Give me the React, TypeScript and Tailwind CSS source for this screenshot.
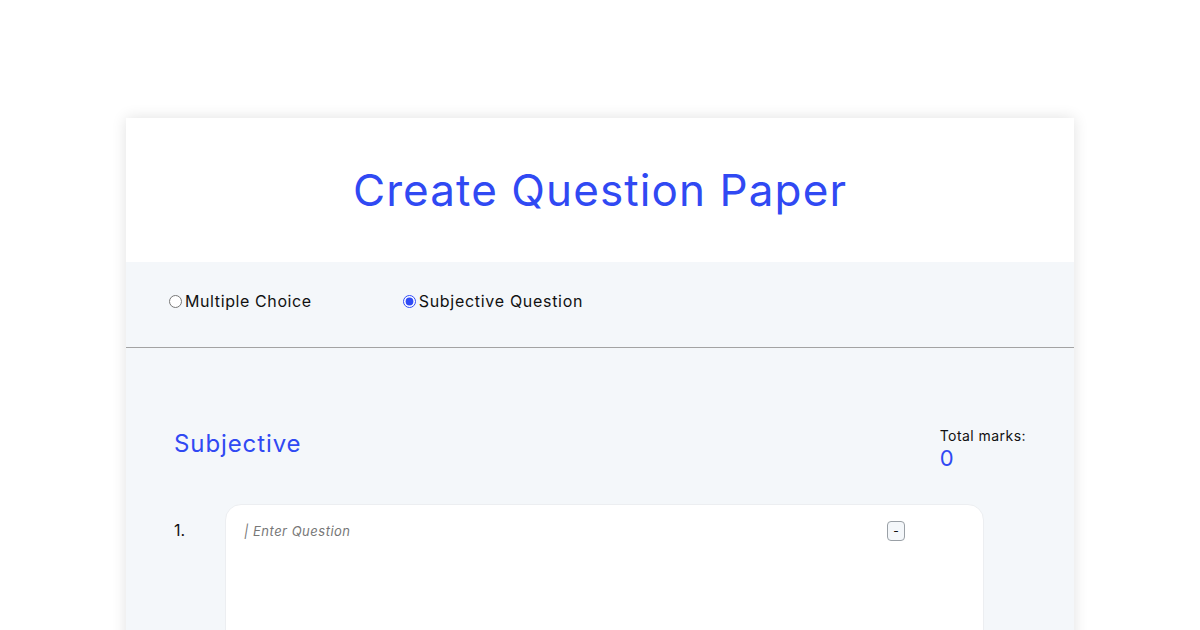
import { useState } from 'react';

export default function App() {
    const [type, setType] = useState<'mcq' | 'subjective'>('subjective');
    const [question, setQuestion] = useState('');

    return (
        <div className="min-h-screen bg-white pt-[118px] font-['Inter',sans-serif] text-[#111]">
            <div className="mx-auto w-[948px] bg-white shadow-[0_0_14px_rgba(0,0,0,0.12)]">
                {/* Header */}
                <div className="flex h-[144px] items-center justify-center">
                    <h1 className="text-[44px] font-normal tracking-[1.1px] text-[#3049f3]">Create Question Paper</h1>
                </div>

                {/* Question type */}
                <div className="flex h-[86px] gap-[91px] border-b border-[#a3a3a3] bg-[#f4f7fa] pl-[43px] pt-[28px]">
                    <label className="flex h-[22px] items-center gap-[3px] text-[16px] tracking-[0.6px]">
                        <input
                            type="radio"
                            name="qtype"
                            checked={type === 'mcq'}
                            onChange={() => setType('mcq')}
                            className="m-0 h-[13px] w-[13px]"
                        />
                        <span>Multiple Choice</span>
                    </label>
                    <label className="flex h-[22px] items-center gap-[3px] text-[16px] tracking-[0.7px]">
                        <input
                            type="radio"
                            name="qtype"
                            checked={type === 'subjective'}
                            onChange={() => setType('subjective')}
                            className="m-0 h-[13px] w-[13px] accent-[#2f4bf5]"
                        />
                        <span>Subjective Question</span>
                    </label>
                </div>

                {/* Subjective section */}
                <div className="bg-[#f4f7fa] px-[48px] pt-[79px] pb-10">
                    <div className="flex items-start justify-between">
                        <h2 className="-mt-[1px] text-[24px] tracking-[0.9px] text-[#3049f3]">Subjective</h2>
                        <div className="flex flex-col">
                            <span className="text-[14px] leading-[18px] tracking-[0.45px]">Total marks:</span>
                            <span className="text-[22px] leading-[26px] text-[#3049f3]">0</span>
                        </div>
                    </div>

                    <div className="mt-[33px] flex">
                        <span className="w-[51px] pt-[14px] text-[16px]">1.</span>
                        <div className="relative h-[200px] w-[759px] rounded-[16px] border border-[#eceef1] bg-white">
                            <textarea
                                value={question}
                                onChange={(e) => setQuestion(e.target.value)}
                                placeholder="| Enter Question"
                                className="h-full w-[620px] resize-none bg-transparent pl-[18px] pt-[17px] text-[13px] italic tracking-[0.5px] text-[#333] outline-none placeholder:text-[#777]"
                            />
                            <button className="absolute right-[78px] top-[16px] flex h-[20px] w-[18px] items-center justify-center rounded-[4px] border border-[#9aa0a6] bg-[#f4f7fa] text-[12px] leading-none">
                                -
                            </button>
                        </div>
                    </div>
                </div>
            </div>
        </div>
    );
}
